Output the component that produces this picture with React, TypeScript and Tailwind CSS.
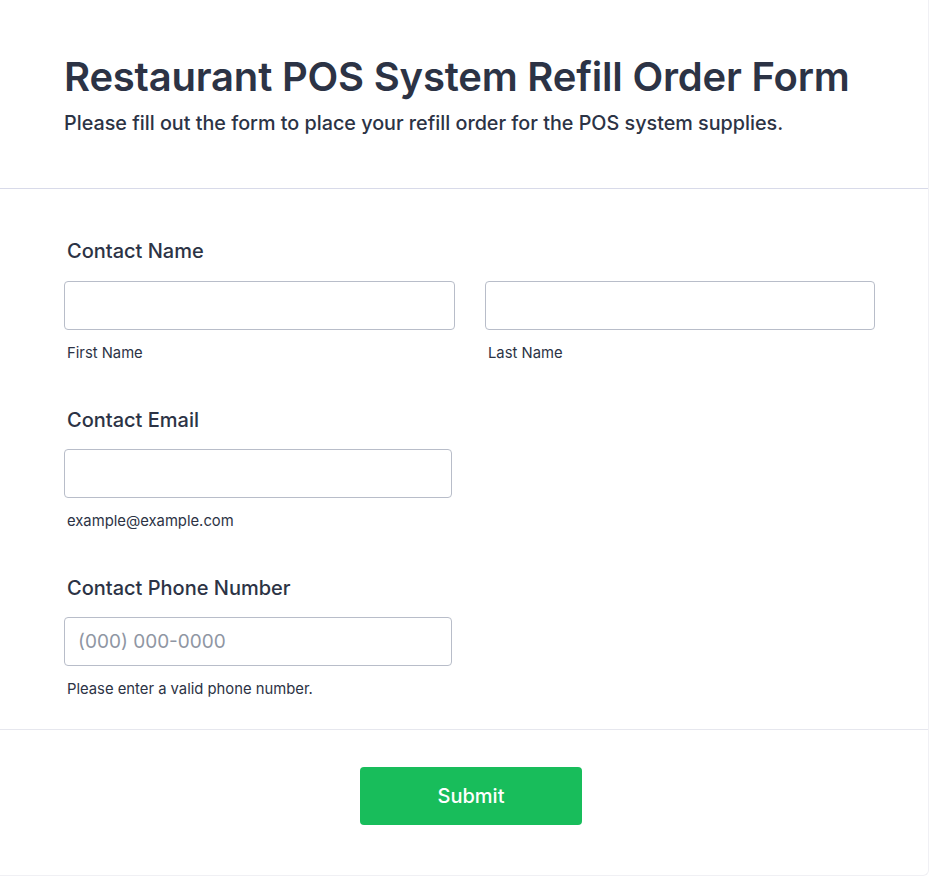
export default function App() {
  return (
    <div className="min-h-[876px] bg-white" style={{ fontFamily: 'Inter, "Noto Sans", sans-serif' }}>
      <div className="w-[929px] h-[876px] bg-white border-r border-b border-[#f0f0f4] rounded-br-md text-[#2c3345]">
        {/* Header */}
        <div className="pt-[54px] pb-[51px] px-16 border-b border-[#d8dae9]">
          <h1 className="text-[40px] leading-[46px] font-semibold tracking-[-0.2px]">
            Restaurant POS System Refill Order Form
          </h1>
          <p className="mt-[9px] text-[19.75px] leading-[28px] font-medium">
            Please fill out the form to place your refill order for the POS system supplies.
          </p>
        </div>

        <div className="pl-16 pr-[52px] pt-[48px] pb-[30px] border-b border-[#e6e7ee]">
          {/* Contact Name */}
          <div className="mb-[43px]">
            <div className="pl-[3px] text-[20px] leading-[28px] font-medium">Contact Name</div>
            <div className="mt-[16px] flex gap-[30px]">
              <div className="w-[391px] shrink-0">
                <input className="w-full h-[49px] rounded-[4px] border border-[#b8bdc9] bg-white px-3 outline-none" />
                <div className="mt-[13px] pl-[3px] text-[14.8px] leading-[20px]">First Name</div>
              </div>
              <div className="w-[390px] shrink-0">
                <input className="w-full h-[49px] rounded-[4px] border border-[#b8bdc9] bg-white px-3 outline-none" />
                <div className="mt-[13px] pl-[3px] text-[14.8px] leading-[20px]">Last Name</div>
              </div>
            </div>
          </div>

          {/* Contact Email */}
          <div className="mb-[43px]">
            <div className="pl-[3px] text-[20px] leading-[28px] font-medium">Contact Email</div>
            <div className="mt-[15px] w-[388px]">
              <input className="w-full h-[49px] rounded-[4px] border border-[#b8bdc9] bg-white px-3 outline-none" />
              <div className="mt-[13px] pl-[3px] text-[14.8px] leading-[20px]">example@example.com</div>
            </div>
          </div>

          {/* Phone */}
          <div>
            <div className="pl-[3px] text-[20px] leading-[28px] font-medium">Contact Phone Number</div>
            <div className="mt-[15px] w-[388px]">
              <input
                placeholder="(000) 000-0000"
                className="w-full h-[49px] rounded-[4px] border border-[#b8bdc9] bg-white px-[13px] text-[19px] outline-none placeholder:text-[#8f96a3]"
              />
              <div className="mt-[13px] pl-[3px] text-[14.8px] leading-[20px]">Please enter a valid phone number.</div>
            </div>
          </div>
        </div>

        {/* Submit */}
        <div className="flex justify-center pt-[37px] pl-[66px] pr-[52px]">
          <button className="w-[222px] h-[58px] rounded-[4px] bg-[#18bd5b] text-white text-[20px] font-medium">
            Submit
          </button>
        </div>
      </div>
    </div>
  )
}
